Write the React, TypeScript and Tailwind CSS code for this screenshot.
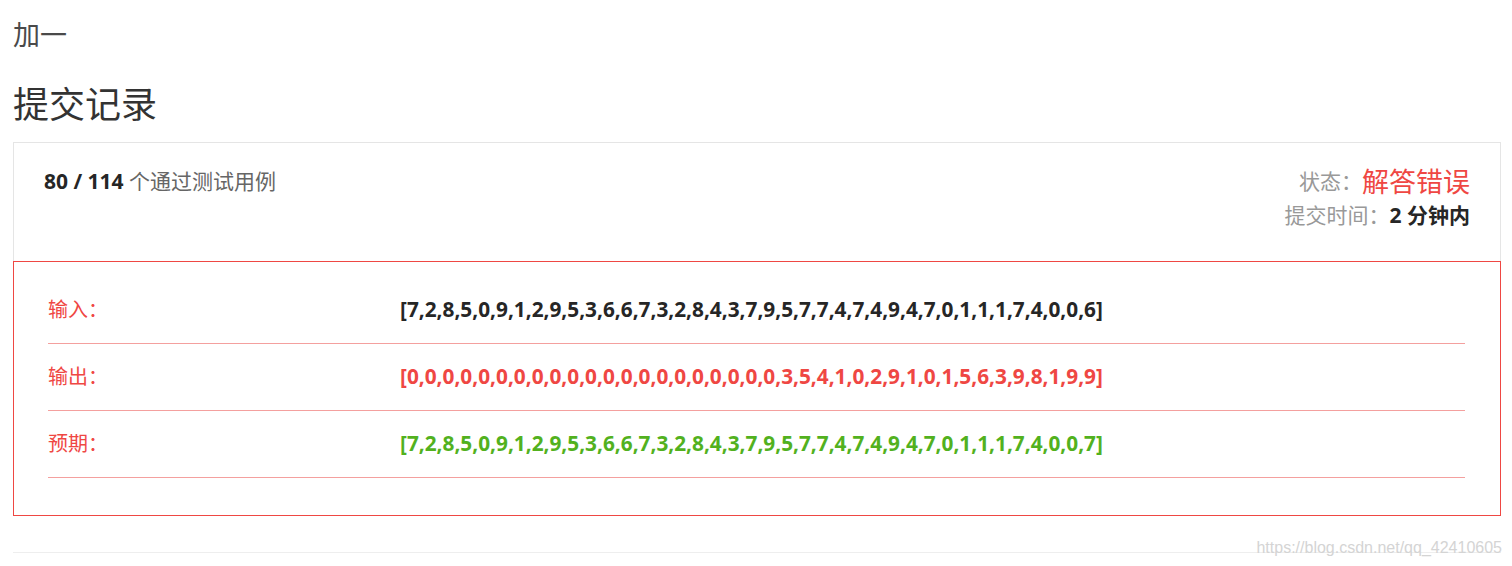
import type { ReactNode } from "react";

const input = [7,2,8,5,0,9,1,2,9,5,3,6,6,7,3,2,8,4,3,7,9,5,7,7,4,7,4,9,4,7,0,1,1,1,7,4,0,0,6];
const output = [0,0,0,0,0,0,0,0,0,0,0,0,0,0,0,0,0,0,0,0,0,3,5,4,1,0,2,9,1,0,1,5,6,3,9,8,1,9,9];
const expected = [7,2,8,5,0,9,1,2,9,5,3,6,6,7,3,2,8,4,3,7,9,5,7,7,4,7,4,9,4,7,0,1,1,1,7,4,0,0,7];

const fmt = (a: number[]) => `[${a.join(",")}]`;

function Row({ label, children }: { label: string; children: ReactNode }) {
  return (
    <div className="flex h-[67px] items-center border-b border-[#f4a09e]">
      <div className="w-[352px] shrink-0 text-[20px] text-[#ef4743]">{label}</div>
      <div className="text-[20.8px] font-bold">{children}</div>
    </div>
  );
}

export default function App() {
  return (
    <div
      className="relative h-[566px] w-full overflow-hidden bg-white pl-[13px] pr-[11px] pt-[17px] text-[#262626]"
      style={{ fontFamily: '"Open Sans", "Noto Sans CJK SC", sans-serif' }}
    >
      <h3 className="text-[27px] leading-[36px] text-[#4a4a4a]">加一</h3>
      <h2 className="mt-[28px] text-[36px] leading-[48px] text-[#333]">提交记录</h2>

      <div className="mt-[13px] border-x border-t border-[#e5e5e5] px-[30px] pb-[29px] pt-[21px]">
        <div className="flex items-start justify-between">
          <div className="text-[21px] leading-[34px]">
            <span className="font-bold text-[#262626]">80 / 114</span>{" "}
            <span className="text-[#666]">个通过测试用例</span>
          </div>
          <div className="text-right">
            <div className="flex h-[34px] items-center justify-end">
              <span className="text-[21px] leading-none text-[#999]">状态：</span>
              <span className="text-[27px] leading-none text-[#ef4743]">解答错误</span>
            </div>
            <div className="text-[21px] leading-[34px]">
              <span className="text-[#999]">提交时间：</span>
              <span className="font-bold text-[#262626]">2 分钟内</span>
            </div>
          </div>
        </div>
      </div>

      <div className="border border-[#ef4743] pb-[37px] pl-[34px] pr-[35px] pt-[15px]">
        <Row label="输入：">
          <span className="text-[#262626]">{fmt(input)}</span>
        </Row>
        <Row label="输出：">
          <span className="text-[#ef4743]">{fmt(output)}</span>
        </Row>
        <Row label="预期：">
          <span className="text-[#52b11e]">{fmt(expected)}</span>
        </Row>
      </div>

      <div className="mt-[36px] border-t border-[#eeeeee]" />

      <div
        className="absolute right-[10px] top-[536px] text-[16px] leading-[24px] text-[#d4d4d4]"
        style={{ fontFamily: '"Liberation Sans", Arial, sans-serif' }}
      >
        https://blog.csdn.net/qq_42410605
      </div>
    </div>
  );
}
